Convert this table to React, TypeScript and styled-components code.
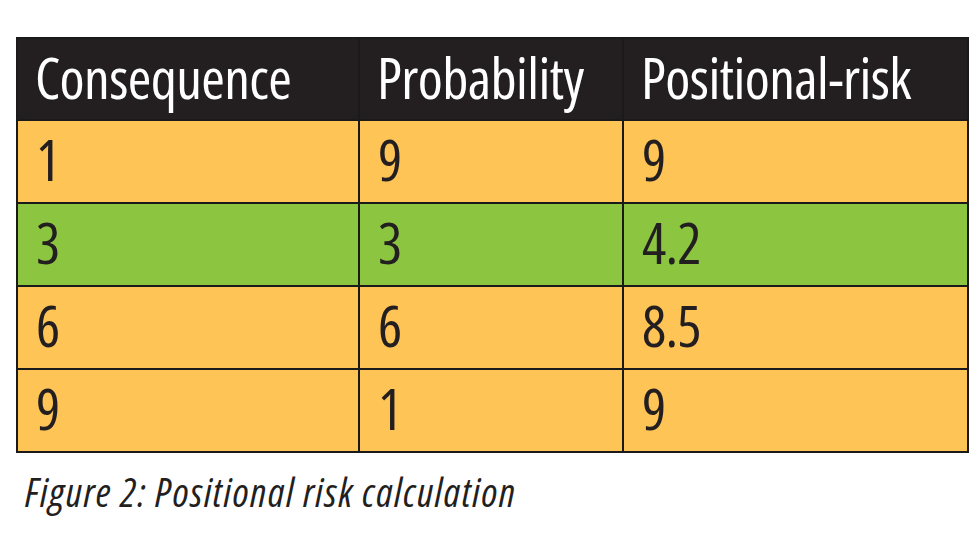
import React from "react";
import styled, { createGlobalStyle } from "styled-components";

const Global = createGlobalStyle`
  html, body { margin: 0; padding: 0; background: #ffffff; }
  body { width: 980px; height: 540px; overflow: hidden; }
`;

const Page = styled.div`
  width: 980px;
  height: 540px;
  padding: 37px 0 0 16px;
  box-sizing: border-box;
  font-family: "Open Sans", "Roboto Condensed", sans-serif;
  font-stretch: 75%;
`;

const Table = styled.table`
  width: 951px;
  border-collapse: collapse;
  table-layout: fixed;
  border: 2px solid #1a1a1a;
`;

const HeadCell = styled.th<{ $w: number }>`
  width: ${(p) => p.$w}px;
  height: 82px;
  background: #231f20;
  color: #ffffff;
  font-weight: 400;
  font-size: 57px;
  letter-spacing: -0.6px;
  line-height: 1;
  text-align: left;
  padding: 0 0 4px 17px;
  border: 2px solid #1a1a1a;
  box-sizing: border-box;
  white-space: nowrap;
`;

const Cell = styled.td<{ $tone: "orange" | "green" }>`
  height: 83px;
  background: ${(p) => (p.$tone === "green" ? "#8cc540" : "#fec456")};
  color: #231f20;
  font-size: 57px;
  letter-spacing: -0.8px;
  line-height: 1;
  text-align: left;
  padding: 0 0 4px 18px;
  border: 2px solid #1a1a1a;
  box-sizing: border-box;
`;

const Caption = styled.div`
  margin: 17px 0 0 9px;
  font-style: italic;
  font-stretch: 75%;
  font-size: 40px;
  line-height: 44px;
  letter-spacing: 1.45px;
  color: #231f20;
  white-space: nowrap;
`;

const rows: { tone: "orange" | "green"; v: [string, string, string] }[] = [
  { tone: "orange", v: ["1", "9", "9"] },
  { tone: "green", v: ["3", "3", "4.2"] },
  { tone: "orange", v: ["6", "6", "8.5"] },
  { tone: "orange", v: ["9", "1", "9"] },
];

export default function App() {
  return (
    <>
      <Global />
      <Page>
        <Table>
          <thead>
            <tr>
              <HeadCell $w={342}>Consequence</HeadCell>
              <HeadCell $w={264}>Probability</HeadCell>
              <HeadCell $w={345}>Positional-risk</HeadCell>
            </tr>
          </thead>
          <tbody>
            {rows.map((r, i) => (
              <tr key={i}>
                {r.v.map((c, j) => (
                  <Cell key={j} $tone={r.tone}>
                    {c}
                  </Cell>
                ))}
              </tr>
            ))}
          </tbody>
        </Table>
        <Caption>Figure 2: Positional risk calculation</Caption>
      </Page>
    </>
  );
}
